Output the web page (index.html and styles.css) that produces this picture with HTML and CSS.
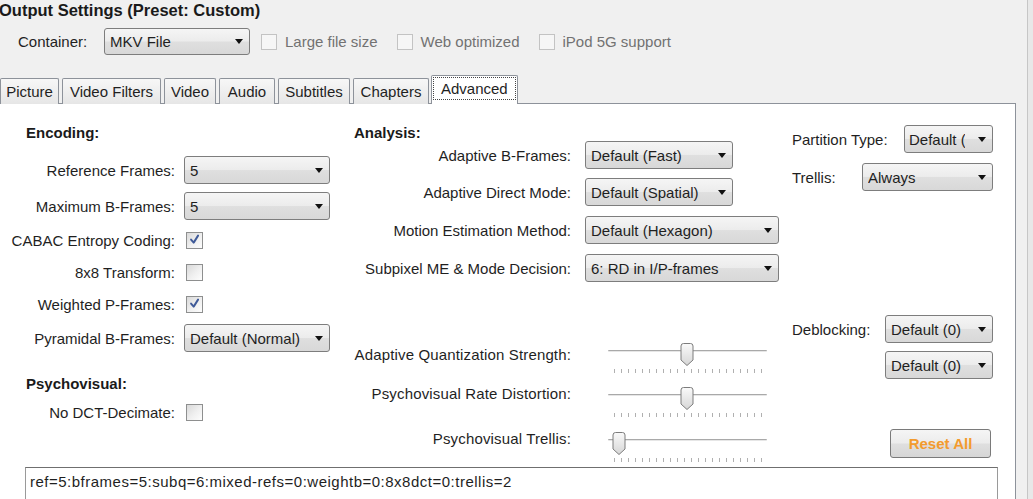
FILE: index.html
```html
<!DOCTYPE html>
<html>
<head>
<meta charset="utf-8">
<title>Output Settings</title>
<link rel="stylesheet" href="styles.css">
</head>
<body>
<div class="app">
  <h1 class="title">Output Settings (Preset: Custom)</h1>
  <div class="container-row">
    <span class="lbl">Container:</span>
    <div class="select w-container"><span class="val">MKV File</span><span class="arrow"></span></div>
    <div class="opt"><span class="cb disabled"></span>Large file size</div>
    <div class="opt"><span class="cb disabled"></span>Web optimized</div>
    <div class="opt"><span class="cb disabled"></span>iPod 5G support</div>
  </div>
  <div class="tabs">
    <div class="tab t-picture">Picture</div>
    <div class="tab t-filters">Video Filters</div>
    <div class="tab t-video">Video</div>
    <div class="tab t-audio">Audio</div>
    <div class="tab t-subs">Subtitles</div>
    <div class="tab t-chapters">Chapters</div>
    <div class="tab active"><span class="focus">Advanced</span></div>
  </div>
  <div class="panel">
    <div class="columns">
      <div class="col-left">
        <div class="heading">Encoding:</div>
        <div class="frow h36 first"><span class="fl">Reference Frames:</span><div class="ctl select w-left"><span class="val">5</span><span class="arrow"></span></div></div>
        <div class="frow h36"><span class="fl">Maximum B-Frames:</span><div class="ctl select w-left"><span class="val">5</span><span class="arrow"></span></div></div>
        <div class="frow h32"><span class="fl">CABAC Entropy Coding:</span><span class="ctl cb checked"><svg viewBox="0 0 16 16" width="14" height="14"><path d="M3.5 7.5 L6.5 11 L11.5 3" fill="none" stroke="#3f5a98" stroke-width="2.2" stroke-linecap="round" stroke-linejoin="round"/></svg></span></div>
        <div class="frow h32"><span class="fl">8x8 Transform:</span><span class="ctl cb"></span></div>
        <div class="frow h32"><span class="fl">Weighted P-Frames:</span><span class="ctl cb checked"><svg viewBox="0 0 16 16" width="14" height="14"><path d="M3.5 7.5 L6.5 11 L11.5 3" fill="none" stroke="#3f5a98" stroke-width="2.2" stroke-linecap="round" stroke-linejoin="round"/></svg></span></div>
        <div class="frow h36"><span class="fl">Pyramidal B-Frames:</span><div class="ctl select w-left"><span class="val">Default (Normal)</span><span class="arrow"></span></div></div>
        <div class="heading psy">Psychovisual:</div>
        <div class="frow h32 after-psy"><span class="fl">No DCT-Decimate:</span><span class="ctl cb"></span></div>
      </div>

      <div class="col-mid">
        <div class="heading">Analysis:</div>
        <div class="mrow m1"><span class="fl">Adaptive B-Frames:</span><div class="ctl select w-mid-s"><span class="val">Default (Fast)</span><span class="arrow"></span></div></div>
        <div class="mrow m2"><span class="fl">Adaptive Direct Mode:</span><div class="ctl select w-mid-s"><span class="val">Default (Spatial)</span><span class="arrow"></span></div></div>
        <div class="mrow m3"><span class="fl">Motion Estimation Method:</span><div class="ctl select w-mid-l"><span class="val">Default (Hexagon)</span><span class="arrow"></span></div></div>
        <div class="mrow m3"><span class="fl">Subpixel ME &amp; Mode Decision:</span><div class="ctl select w-mid-l"><span class="val">6: RD in I/P-frames</span><span class="arrow"></span></div></div>

        <div class="srow s1">
          <span class="fl">Adaptive Quantization Strength:</span>
          <div class="slider">
            <div class="track"></div>
            <div class="ticks"></div>
            <svg class="thumb mid" viewBox="0 0 14 23" width="14" height="23"><defs><linearGradient id="g1" x1="0" y1="0" x2="0" y2="1"><stop offset="0" stop-color="#fafafa"/><stop offset="1" stop-color="#d6d6d6"/></linearGradient></defs><path d="M1 3 Q1 0.5 3.5 0.5 H10.5 Q13 0.5 13 3 V17 L7 22.5 L1 17 Z" fill="url(#g1)" stroke="#7c7c7c"/></svg>
          </div>
        </div>
        <div class="srow s2">
          <span class="fl">Psychovisual Rate Distortion:</span>
          <div class="slider">
            <div class="track"></div>
            <div class="ticks"></div>
            <svg class="thumb mid" viewBox="0 0 14 23" width="14" height="23"><defs><linearGradient id="g2" x1="0" y1="0" x2="0" y2="1"><stop offset="0" stop-color="#fafafa"/><stop offset="1" stop-color="#d6d6d6"/></linearGradient></defs><path d="M1 3 Q1 0.5 3.5 0.5 H10.5 Q13 0.5 13 3 V17 L7 22.5 L1 17 Z" fill="url(#g2)" stroke="#7c7c7c"/></svg>
          </div>
        </div>
        <div class="srow s3">
          <span class="fl">Psychovisual Trellis:</span>
          <div class="slider">
            <div class="track"></div>
            <div class="ticks"></div>
            <svg class="thumb start" viewBox="0 0 14 23" width="14" height="23"><defs><linearGradient id="g3" x1="0" y1="0" x2="0" y2="1"><stop offset="0" stop-color="#fafafa"/><stop offset="1" stop-color="#d6d6d6"/></linearGradient></defs><path d="M1 3 Q1 0.5 3.5 0.5 H10.5 Q13 0.5 13 3 V17 L7 22.5 L1 17 Z" fill="url(#g3)" stroke="#7c7c7c"/></svg>
          </div>
        </div>
      </div>

      <div class="col-right">
        <div class="rrow r1"><span>Partition Type:</span><div class="select w-part"><span class="val">Default (Most)</span><span class="arrow"></span></div></div>
        <div class="rrow r2"><span>Trellis:</span><div class="select w-trellis"><span class="val">Always</span><span class="arrow"></span></div></div>
        <div class="rrow r3"><span>Deblocking:</span><div class="select w-deb"><span class="val">Default (0)</span><span class="arrow"></span></div></div>
        <div class="rrow r4"><span></span><div class="select w-deb"><span class="val">Default (0)</span><span class="arrow"></span></div></div>
        <div class="btn">Reset All</div>
      </div>
    </div>
    <div class="cmd">ref=5:bframes=5:subq=6:mixed-refs=0:weightb=0:8x8dct=0:trellis=2</div>
  </div>
</div>
</body>
</html>
```
FILE: styles.css
```css
html, body {
  margin: 0;
  padding: 0;
}
body {
  background: #e8e8e8;
  font-family: "Liberation Sans", Arial, sans-serif;
  font-size: 15px;
  color: #1f1f1f;
  overflow: hidden;
}
.app {
  width: 1027px;
  height: 499px;
  background: #f0f0f0;
  border-right: 1px solid #c6c6c6;
  overflow: hidden;
  display: flex;
  flex-direction: column;
}
.title {
  margin: 0 0 0 -1px;
  font-size: 16.5px;
  font-weight: bold;
  line-height: 20px;
  height: 20px;
  color: #1a1a1a;
}

/* container row */
.container-row {
  display: flex;
  align-items: center;
  height: 27px;
  margin-top: 8px;
  padding-left: 18px;
}
.container-row .lbl {
  width: 72px;
  margin-right: 14px;
}
.opt {
  display: flex;
  align-items: center;
  gap: 8px;
  color: #727272;
  margin-left: 19px;
}
.w-container + .opt { margin-left: 11px; }

/* select */
.select {
  box-sizing: border-box;
  height: 28px;
  border: 1px solid #7d7d7d;
  border-radius: 3px;
  background: linear-gradient(#f5f5f5 0%, #ececec 48%, #dfdfdf 52%, #d8d8d8 100%);
  display: flex;
  align-items: center;
  padding: 0 6px 0 5px;
  flex: none;
}
.select .val {
  flex: 1;
  overflow: hidden;
  white-space: nowrap;
}
.select .arrow {
  flex: none;
  width: 0;
  height: 0;
  border-left: 4.5px solid transparent;
  border-right: 4.5px solid transparent;
  border-top: 5px solid #111;
  margin-left: 6px;
}
.w-container { width: 146px; height: 27px; }
.w-left { width: 146px; }
.w-mid-s { width: 148px; }
.w-mid-l { width: 194px; }
.w-part { width: 89px; padding-left: 4px; }
.w-part .val { flex: none; width: 56px; }
.w-part .arrow { margin-left: auto; }
.w-trellis { width: 131px; }
.w-deb { width: 108px; }

/* checkbox */
.cb {
  box-sizing: border-box;
  width: 17px;
  height: 17px;
  border: 1px solid #8e8f8f;
  background: linear-gradient(135deg, #d9d9d9 0%, #f0f0f0 55%, #fdfdfd 100%);
  display: inline-flex;
  align-items: center;
  justify-content: center;
  flex: none;
}
.cb.disabled {
  width: 16px;
  height: 16px;
  border-color: #c3c3c3;
  background: #f6f6f6;
}

/* tabs */
.tabs {
  display: flex;
  align-items: flex-end;
  height: 29px;
  margin-top: 20px;
  margin-bottom: -1px;
  position: relative;
  z-index: 1;
  gap: 3px;
}
.tab {
  box-sizing: border-box;
  height: 26px;
  border: 1px solid #8d929a;
  border-bottom: none;
  border-radius: 2px 2px 0 0;
  padding: 0;
  text-align: center;
  line-height: 25px;
  background: linear-gradient(#f7f7f7, #e6e6e6);
  white-space: nowrap;
}
.t-picture { width: 59px; }
.t-filters { width: 99px; }
.t-video { width: 52px; }
.t-audio { width: 56px; }
.t-subs { width: 72px; }
.t-chapters { width: 76px; }
.tab.active {
  height: 29px;
  background: #fff;
  padding: 1px 1px 0;
  margin-left: -1px;
  line-height: 21px;
}
.tab.active .focus {
  display: block;
  padding: 0 7px;
  border: 1px dotted #444;
}

/* panel */
.panel {
  flex: 1;
  width: 1016px;
  box-sizing: border-box;
  background: #fff;
  border-top: 1px solid #8d929a;
  border-right: 1px solid #8d929a;
  padding-top: 20px;
}
.columns {
  display: flex;
  height: 341px;
}
.heading {
  font-weight: bold;
  line-height: 18px;
  height: 18px;
  color: #1a1a1a;
  white-space: nowrap;
}

/* left column */
.col-left {
  width: 331px;
  flex: none;
  display: flex;
  flex-direction: column;
}
.col-left .heading { padding-left: 26px; }
.frow {
  display: flex;
  align-items: center;
}
.frow .fl {
  width: 175px;
  flex: none;
  text-align: right;
  white-space: nowrap;
}
.frow .ctl { margin-left: 9px; }
.frow .cb { margin-left: 11px; }
.h36 { height: 36px; }
.h32 { height: 32px; }
.frow.first { margin-top: 10px; }
.heading.psy { margin-top: 19px; }
.frow.after-psy { margin-top: 3px; }

/* middle column */
.col-mid {
  width: 425px;
  margin-left: 23px;
  flex: none;
  display: flex;
  flex-direction: column;
}
.mrow {
  display: flex;
  align-items: center;
  height: 28px;
}
.mrow .fl, .srow .fl {
  width: 217px;
  flex: none;
  text-align: right;
  white-space: nowrap;
}
.mrow .ctl { margin-left: 14px; }
.m1 { margin-top: -1px; }
.m2 { margin-top: 9px; }
.m3 { margin-top: 10px; }

.srow {
  display: flex;
  align-items: flex-start;
  height: 38px;
}
.srow .fl {
  line-height: 18px;
  margin-top: 3px;
  letter-spacing: 0.15px;
}
.s1 { margin-top: 56px; }
.s1 .fl { margin-top: 8px; }
.s2 { margin-top: 6px; }
.s3 { margin-top: 7px; }
.slider {
  position: relative;
  width: 164px;
  height: 38px;
  margin-left: 35px;
  flex: none;
}
.track {
  position: absolute;
  left: 2px;
  top: 12px;
  width: 159px;
  height: 0;
  border-top: 1px solid #a9a9a9;
  border-bottom: 1px solid #e6e6e6;
  border-radius: 1px;
}
.ticks {
  position: absolute;
  left: 8px;
  top: 31px;
  width: 149px;
  height: 4px;
  background: repeating-linear-gradient(to right, #b0b0b0 0 1px, transparent 1px 7px);
}
.thumb {
  position: absolute;
  top: 5px;
}
.thumb.mid { left: 74px; }
.thumb.start { left: 6px; }

/* right column */
.col-right {
  width: 201px;
  margin-left: 13px;
  flex: none;
  display: flex;
  flex-direction: column;
}
.rrow {
  display: flex;
  align-items: center;
  justify-content: space-between;
  height: 28px;
  white-space: nowrap;
}
.r1 { margin-top: 1px; }
.r2 { margin-top: 10px; }
.r3 { margin-top: 124px; }
.r4 { margin-top: 8px; }
.btn {
  align-self: flex-end;
  margin-right: 2px;
  margin-top: 50px;
  box-sizing: border-box;
  width: 101px;
  height: 29px;
  border: 1px solid #7a7a7a;
  border-radius: 3px;
  background: linear-gradient(#f5f5f5 0%, #ececec 48%, #dfdfdf 52%, #d6d6d6 100%);
  color: #f39b2e;
  font-weight: bold;
  display: flex;
  align-items: center;
  justify-content: center;
}

/* command line */
.cmd {
  margin-left: 25px;
  margin-top: 2px;
  width: 973px;
  height: 40px;
  box-sizing: border-box;
  border: 1px solid #9a9a9a;
  border-top-color: #6f6f6f;
  padding: 5px 4px;
  line-height: 18px;
  letter-spacing: 0.5px;
  white-space: nowrap;
  background: #fff;
}
```
